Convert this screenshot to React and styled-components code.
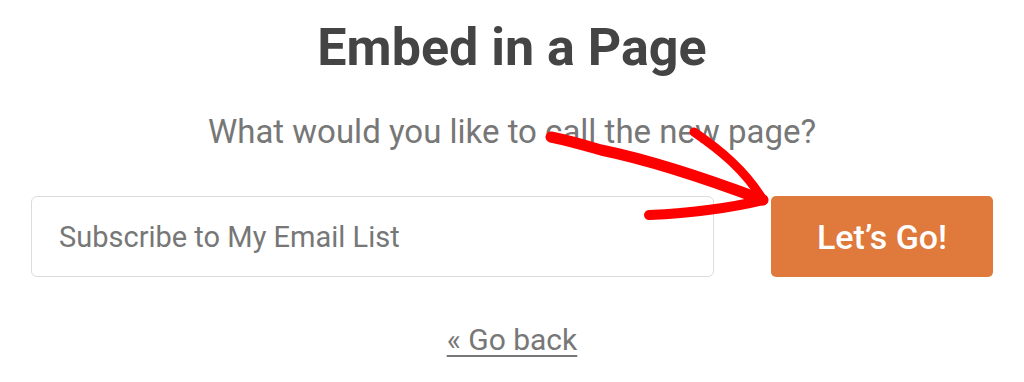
import React from "react";
import styled, { createGlobalStyle } from "styled-components";

const Global = createGlobalStyle`
  html, body { margin: 0; padding: 0; background: #fff; }
  body { font-family: Roboto, "Liberation Sans", Arial, sans-serif; }
  * { box-sizing: border-box; }
`;

const Page = styled.div`
  position: relative;
  width: 1024px;
  height: 382px;
  padding: 18px 31px 0;
  display: flex;
  flex-direction: column;
  align-items: center;
  overflow: hidden;
`;

const Title = styled.h1`
  margin: 0;
  font-size: 52px;
  line-height: 60px;
  font-weight: 700;
  color: #444;
`;

const Question = styled.p`
  margin: 34px 0 0;
  font-size: 33px;
  line-height: 40px;
  font-weight: 400;
  color: #777;
`;

const Row = styled.div`
  margin-top: 44px;
  width: 100%;
  display: flex;
  gap: 57px;
`;

const Field = styled.input`
  flex: 1;
  height: 81px;
  border: 1px solid #dcdcdc;
  border-radius: 6px;
  padding: 0 27px;
  font-family: inherit;
  font-size: 29px;
  color: #444;
  outline: none;
  &::placeholder { color: #777; }
`;

const GoButton = styled.button`
  width: 222px;
  height: 81px;
  border: none;
  border-radius: 5px;
  background: #e07a3c;
  color: #fff;
  font-family: inherit;
  font-size: 34px;
  font-weight: 500;
  cursor: pointer;
`;

const Back = styled.a`
  margin-top: 45px;
  font-size: 30px;
  line-height: 36px;
  color: #777;
  text-decoration: underline;
  text-underline-offset: 5px;
  text-decoration-thickness: 2px;
`;

const Arrow = styled.svg`
  position: absolute;
  left: 0;
  top: 0;
  pointer-events: none;
`;

export default function App() {
  return (
    <>
      <Global />
      <Page>
        <Title>Embed in a Page</Title>
        <Question>What would you like to call the new page?</Question>
        <Row>
          <Field placeholder="Subscribe to My Email List" />
          <GoButton>Let’s Go!</GoButton>
        </Row>
        <Back href="#">« Go back</Back>
        <Arrow width="1024" height="382" viewBox="0 0 1024 382">
          <g fill="none" stroke="#f00" strokeLinecap="round" strokeLinejoin="round">
            <path d="M551 137 C575 142 590 147 601 150 C650 160 710 180 763 200" strokeWidth="11" />
            <path d="M694 132 C720 150 745 170 763 200" strokeWidth="9" />
            <path d="M763 200 C730 208 690 213 649 215" strokeWidth="10" />
          </g>
        </Arrow>
      </Page>
    </>
  );
}
